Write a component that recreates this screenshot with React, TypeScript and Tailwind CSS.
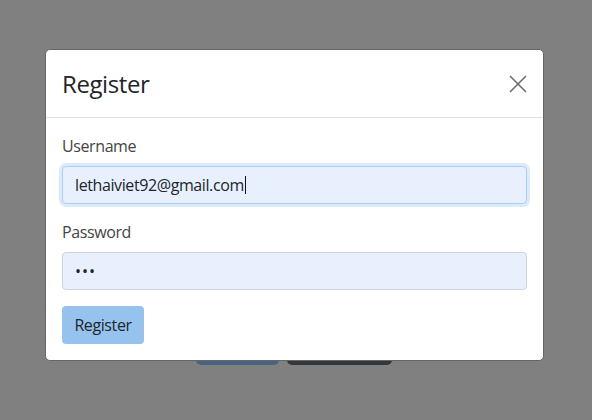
import React from "react";

export default function App() {
  return (
    <div
      className="relative w-[592px] h-[420px] bg-[#808080] overflow-hidden"
      style={{ fontFamily: '"Open Sans", "Noto Sans", sans-serif' }}
    >
      <div className="pt-[327px] flex justify-center gap-[8px] pr-[4px]">
        <div className="w-[83px] h-[38px] rounded-[5px] bg-[#4a6380]" />
        <div className="w-[105px] h-[38px] rounded-[5px] bg-[#32373b]" />
      </div>

      <div className="absolute left-[45px] top-[49px] w-[499px] bg-white border border-[#666] rounded-[5px] flex flex-col">
        <div className="h-[68px] px-[16px] flex items-center justify-between border-b border-[#dee2e6]">
          <h4 className="text-[24px] leading-[36px] text-[#212529] font-normal tracking-[-0.4px]">Register</h4>
          <button className="w-[20px] h-[20px] flex items-center justify-center mr-[-1px]">
            <svg width="18" height="18" viewBox="0 0 18 18" fill="none" stroke="#6c6c6c" strokeWidth="1.6">
              <path d="M1 1 L17 17 M17 1 L1 17" />
            </svg>
          </button>
        </div>
        <div className="p-[16px] flex flex-col">
          <label className="text-[16px] leading-[24px] text-[#444] mb-[8px] tracking-[-0.4px]">Username</label>
          <div className="h-[38px] rounded-[4px] bg-[#e8f0fe] border border-[#a8d0f0] shadow-[0_0_0_3px_#dcebfb] flex items-center px-[12px] text-[16px] text-[#212529]">
            <span className="tracking-[-0.4px]">lethaiviet92@gmail.com</span>
            <span className="w-[1px] h-[18px] bg-[#111] ml-[1px]" />
          </div>
          <label className="text-[16px] leading-[24px] text-[#444] mt-[16px] mb-[8px] tracking-[-0.4px]">Password</label>
          <div className="h-[38px] rounded-[4px] bg-[#e8f0fe] border border-[#ced4da] flex items-center px-[12px] text-[16px] text-[#212529]">
            <span className="tracking-[1px]">•••</span>
          </div>
          <div className="mt-[16px]">
            <button className="h-[38px] w-[82px] rounded-[4px] bg-[#95c3ee] text-[16px] text-[#212529] tracking-[-0.4px]">Register</button>
          </div>
        </div>
      </div>
    </div>
  );
}
